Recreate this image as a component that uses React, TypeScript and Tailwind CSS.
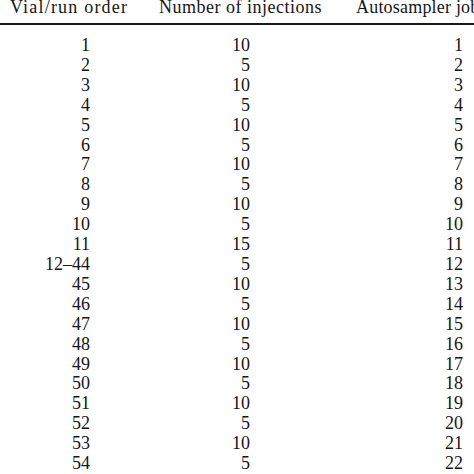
const rows: [string, string, string][] = [
  ["1", "10", "1"],
  ["2", "5", "2"],
  ["3", "10", "3"],
  ["4", "5", "4"],
  ["5", "10", "5"],
  ["6", "5", "6"],
  ["7", "10", "7"],
  ["8", "5", "8"],
  ["9", "10", "9"],
  ["10", "5", "10"],
  ["11", "15", "11"],
  ["12–44", "5", "12"],
  ["45", "10", "13"],
  ["46", "5", "14"],
  ["47", "10", "15"],
  ["48", "5", "16"],
  ["49", "10", "17"],
  ["50", "5", "18"],
  ["51", "10", "19"],
  ["52", "5", "20"],
  ["53", "10", "21"],
  ["54", "5", "22"],
];

export default function App() {
  return (
    <div
      className="w-[474px] h-[474px] overflow-hidden bg-white text-[#151515] text-[18px]"
      style={{ fontFamily: '"Liberation Serif", serif' }}
    >
      {/* Cabeçalho */}
      <div className="grid grid-cols-[150px_197px_200px] h-[23px] whitespace-nowrap leading-[20px]">
        <div className="pl-[10px] mt-[-3px] tracking-[1.2px]">Vial/run order</div>
        <div className="pl-[9px] mt-[-3px] tracking-[0.5px]">Number of injections</div>
        <div className="pl-[9px] mt-[-3px] tracking-[0.2px]">Autosampler job</div>
      </div>
      <div className="h-[2px] bg-[#1a1a1a]" />

      {/* Linhas */}
      <div className="pt-[11px] leading-[19.9px]">
        {rows.map((r, i) => (
          <div key={i} className="grid grid-cols-[150px_197px_127px]">
            <div className="text-right pr-[60px]">{r[0]}</div>
            <div className="text-right pr-[97px]">{r[1]}</div>
            <div className="text-right pr-[11px]">{r[2]}</div>
          </div>
        ))}
      </div>
    </div>
  );
}
